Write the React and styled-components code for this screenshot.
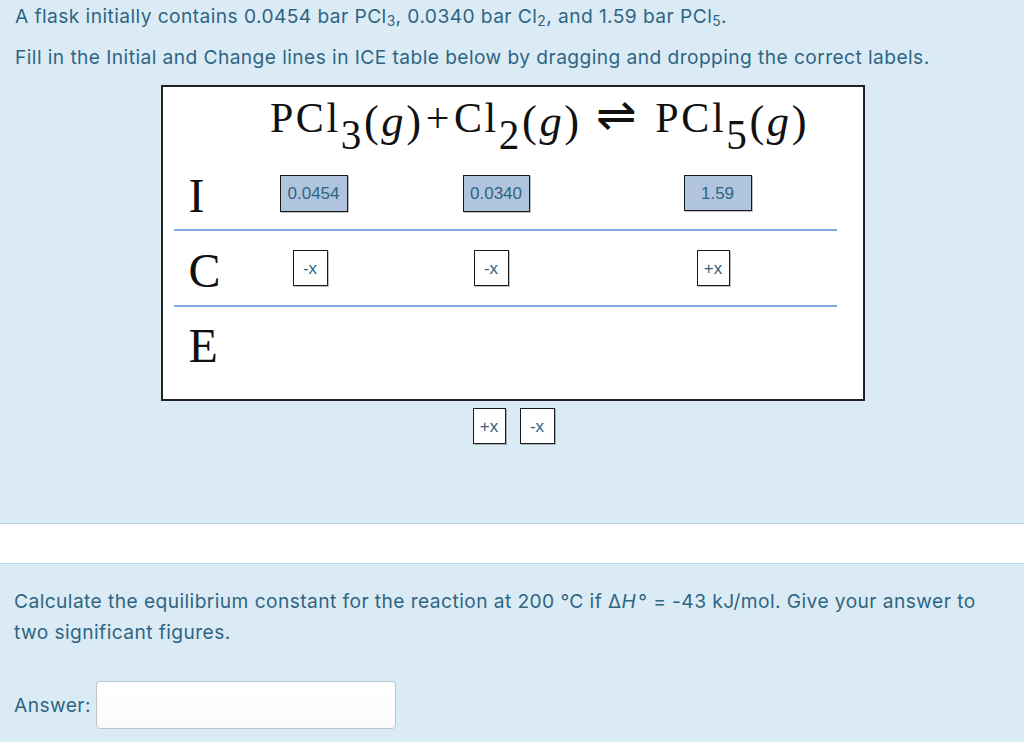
import React from "react";
import styled, { createGlobalStyle } from "styled-components";

const GlobalStyle = createGlobalStyle`
    body {
        margin: 0;
        background: #ffffff;
        font-family: Inter, "Liberation Sans", sans-serif;
    }
`;

const Formulation = styled.div`
    background: #dbebf6;
    color: #2f6582;
    padding: ${(p) => (p.$top ? "3px 14px 79px 15px" : "22px 14px 16px")};
    border-top: ${(p) => (p.$top ? "none" : "1px solid #b9d9ea")};
    border-bottom: ${(p) => (p.$top ? "1px solid #b9d9ea" : "none")};
    font-size: 19.2px;
    letter-spacing: 0.42px;
    line-height: 27px;
`;

const Para = styled.p`
    margin: 0 0 14px;
    line-height: ${(p) => (p.$tall ? "31px" : "27px")};
`;

const TextSub = styled.sub`
    font-size: 0.72em;
    vertical-align: -0.25em;
    line-height: 0;
`;

const Italic = styled.i`
    padding-right: 2px;
`;

const Spacer = styled.div`
    height: 39px;
    background: #ffffff;
`;

const Table = styled.div`
    width: 700px;
    margin: 0 auto;
    border: 2px solid #222;
    background: #fff;
    display: flex;
    flex-direction: column;
    letter-spacing: 0;
`;

const Equation = styled.div`
    font-family: "Liberation Serif", serif;
    font-size: 42px;
    letter-spacing: 2.6px;
    color: #111;
    text-align: center;
    height: 70px;
    line-height: 60px;
    padding-left: 54px;
    white-space: nowrap;
`;

const Sub = styled.span`
    font-size: 0.98em;
    vertical-align: -0.42em;
    line-height: 0;
`;

const Paren = styled.span`
    display: inline-block;
    font-size: 1.06em;
    transform: translateY(0.1em);
`;

const Plus = styled.span`
    margin: 0 2px;
`;

const Arrow = styled.span`
    display: inline-block;
    margin: 0 18px 0 16px;
    font-family: "DejaVu Sans", sans-serif;
    font-size: 1.05em;
    font-weight: 200;
    transform: scaleX(1.1) translateY(-0.04em);
`;

const Row = styled.div`
    display: grid;
    grid-template-columns: 117px 183px 221px 1fr;
    align-items: ${(p) => (p.$top ? "start" : "center")};
    height: ${(p) => p.$h}px;
    padding-top: ${(p) => p.$pt || 0}px;
    box-sizing: border-box;
`;

const Letter = styled.div`
    font-family: "Liberation Serif", serif;
    font-size: 48px;
    line-height: 48px;
    color: #111;
    padding-left: 26px;
    margin-top: 6px;
`;

const Rule = styled.div`
    height: 2px;
    background: #86a5dc;
    margin: 0 26px 0 11px;
`;

const Label = styled.div`
    justify-self: start;
    box-sizing: border-box;
    height: ${(p) => p.$h || 36}px;
    width: ${(p) => p.$w}px;
    margin-left: ${(p) => p.$off || 0}px;
    display: flex;
    align-items: center;
    justify-content: center;
    font-family: "Liberation Sans", Arial, sans-serif;
    font-size: 17px;
    letter-spacing: 0;
    color: #2f6582;
    background: ${(p) => (p.$filled ? "#b0c4de" : "#ffffff")};
    border: 1px solid #1a1a1a;
    box-shadow: 1px 1px 0 rgba(0, 0, 0, 0.25);
`;

const Options = styled.div`
    display: flex;
    justify-content: center;
    gap: 14px;
    margin-top: 7px;
    padding-left: 2px;
`;

const AnswerRow = styled.div`
    display: flex;
    align-items: center;
    margin-top: 33px;
`;

const AnswerLabel = styled.span`
    width: 82px;
`;

const Input = styled.input`
    width: 300px;
    height: 48px;
    box-sizing: border-box;
    border: 1px solid #b9c6ce;
    border-radius: 4px;
    background: linear-gradient(#ffffff, #fbfbfb);
`;

const G = () => (
    <Paren>
        (<i>g</i>)
    </Paren>
);

export default function App() {
    return (
        <>
            <GlobalStyle />
            <Formulation $top>
                <Para>
                    A flask initially contains 0.0454 bar PCl<TextSub>3</TextSub>, 0.0340 bar Cl<TextSub>2</TextSub>, and 1.59 bar PCl<TextSub>5</TextSub>.
                </Para>
                <Para>
                    Fill in the Initial and Change lines in ICE table below by dragging and dropping the correct labels.
                </Para>
                <Table>
                    <Equation>
                        PCl<Sub>3</Sub>
                        <G />
                        <Plus>+</Plus>Cl<Sub>2</Sub>
                        <G />
                        <Arrow>⇌</Arrow>PCl<Sub>5</Sub>
                        <G />
                    </Equation>
                    <Row $h={72}>
                        <Letter>I</Letter>
                        <Label $filled $w={68} $h={37}>0.0454</Label>
                        <Label $filled $w={67} $h={37}>0.0340</Label>
                        <Label $filled $w={68}>1.59</Label>
                    </Row>
                    <Rule />
                    <Row $h={74}>
                        <Letter>C</Letter>
                        <Label $w={35} $off={13}>-x</Label>
                        <Label $w={35} $off={11}>-x</Label>
                        <Label $w={33} $off={13}>+x</Label>
                    </Row>
                    <Rule />
                    <Row $h={92} $top $pt={9}>
                        <Letter>E</Letter>
                    </Row>
                </Table>
                <Options>
                    <Label $w={33}>+x</Label>
                    <Label $w={35}>-x</Label>
                </Options>
            </Formulation>
            <Spacer />
            <Formulation>
                <Para $tall>
                    Calculate the equilibrium constant for the reaction at 200 °C if Δ<Italic>H</Italic>° = -43 kJ/mol. Give your answer to two significant figures.
                </Para>
                <AnswerRow>
                    <AnswerLabel>Answer:</AnswerLabel>
                    <Input type="text" />
                </AnswerRow>
            </Formulation>
        </>
    );
}
